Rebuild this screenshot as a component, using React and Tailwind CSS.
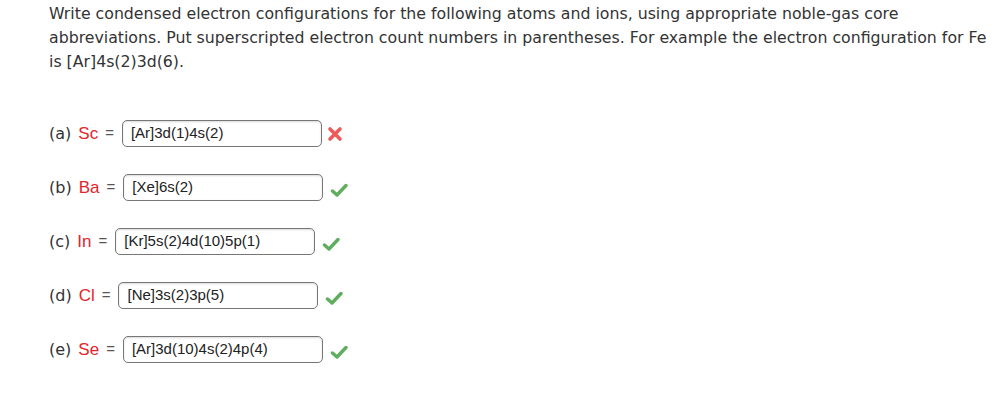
import React from "react";

const ROWS = [
  { key: "a", sym: "Sc", value: "[Ar]3d(1)4s(2)", ok: false },
  { key: "b", sym: "Ba", value: "[Xe]6s(2)", ok: true },
  { key: "c", sym: "In", value: "[Kr]5s(2)4d(10)5p(1)", ok: true },
  { key: "d", sym: "Cl", value: "[Ne]3s(2)3p(5)", ok: true },
  { key: "e", sym: "Se", value: "[Ar]3d(10)4s(2)4p(4)", ok: true },
];

function Cross() {
  return (
    <svg width="16" height="16" viewBox="0 0 16 16" className="ml-[5px]">
      <path d="M3 3 L13 13 M13 3 L3 13" stroke="#ef5a5a" strokeWidth="3.6" strokeLinecap="round" />
    </svg>
  );
}

function Check() {
  return (
    <svg width="18" height="16" viewBox="0 0 18 16" className="ml-[7px] mt-[4px]">
      <path d="M2.5 9 L7 13 L16 3.5" fill="none" stroke="#5fae5f" strokeWidth="3.4" strokeLinecap="round" strokeLinejoin="round" />
    </svg>
  );
}

export default function App() {
  return (
    <div className="min-h-[400px] w-[1006px] bg-white pl-[49px] pt-[2px] text-[#333]">
      <p className="text-[15.75px] leading-[24px] font-['DejaVu_Sans',sans-serif]">
        Write condensed electron configurations for the following atoms and ions, using appropriate noble-gas core
        <br />
        abbreviations. Put superscripted electron count numbers in parentheses. For example the electron configuration for Fe
        <br />
        is [Ar]4s(2)3d(6).
      </p>
      <div className="mt-[46px] flex flex-col gap-[27px]">
        {ROWS.map((r) => (
          <div key={r.key} className="flex h-[27px] items-center">
            <span className="text-[16px] font-['DejaVu_Sans',sans-serif]">({r.key})</span>
            <span className="ml-[7px] text-[17px] text-[#e3242b] font-['Liberation_Sans',sans-serif]">{r.sym}</span>
            <span className="ml-[7px] text-[15px] text-[#555] font-['Liberation_Sans',sans-serif]">=</span>
            <div className="ml-[8px] flex h-[27px] w-[200px] items-center rounded-[5px] border border-[#777] bg-white pl-[8px] text-[15px] text-[#222] shadow-[inset_0_1px_2px_rgba(0,0,0,0.15)] font-['Liberation_Sans',sans-serif]">
              {r.value}
            </div>
            {r.ok ? <Check /> : <Cross />}
          </div>
        ))}
      </div>
    </div>
  );
}
